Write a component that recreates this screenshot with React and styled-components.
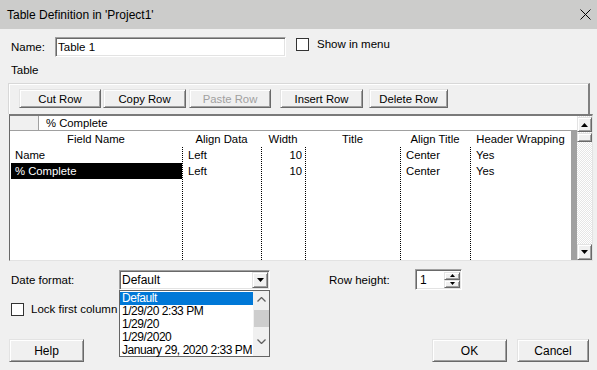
import React from 'react';
import styled, { createGlobalStyle } from 'styled-components';

const Global = createGlobalStyle`
  html, body { margin: 0; padding: 0; background: #f0f0f0; }
  body { font-family: "Liberation Sans", Arial, sans-serif; font-size: 11.5px; color: #000; }
  #root { width: 597px; height: 370px; overflow: hidden; }
  * { box-sizing: border-box; }
`;

const Window = styled.div`
  width: 597px;
  height: 370px;
  display: flex;
  flex-direction: column;
  background: #f0f0f0;
  overflow: hidden;
`;

const TitleBar = styled.div`
  height: 29px;
  flex: none;
  background: #cccccb;
  display: flex;
  align-items: center;
  justify-content: space-between;
  padding: 0 6px 0 7px;
  font-size: 12px;
`;

const CloseIcon = () => (
  <svg width="11" height="11" viewBox="0 0 11 11">
    <path d="M0.5 0.5 L10.5 10.5 M10.5 0.5 L0.5 10.5" stroke="#000" strokeWidth="1" fill="none" />
  </svg>
);

const Body = styled.div`
  flex: 1;
  display: flex;
  flex-direction: column;
  padding: 8px 4px 8px 8px;
`;

const Row = styled.div`
  display: flex;
  align-items: ${(p) => p.$align || 'center'};
  padding-left: ${(p) => p.$pl ?? 3}px;
  margin-top: ${(p) => p.$mt || 0}px;
`;

const Label = styled.span`
  width: ${(p) => (p.$w ? `${p.$w}px` : 'auto')};
  line-height: ${(p) => p.$lh || 14}px;
  margin-left: ${(p) => p.$ml || 0}px;
  white-space: nowrap;
  flex: none;
`;

const sunken = `
  border: 1px solid;
  border-color: #a0a0a0 #ffffff #ffffff #a0a0a0;
  box-shadow: inset 1px 1px #696969, inset -1px -1px #e3e3e3;
  background: #fff;
`;

const raised = `
  border: 1px solid;
  border-color: #e3e3e3 #696969 #696969 #e3e3e3;
  box-shadow: inset 1px 1px #ffffff, inset -1px -1px #a0a0a0;
  background: #f0f0f0;
`;

const TextInput = styled.div`
  ${sunken}
  width: 231px;
  height: 20px;
  padding-left: 2px;
  line-height: 18px;
  flex: none;
`;

const CheckBox = styled.div`
  width: 13px;
  height: 13px;
  border: 1px solid #333;
  background: #fff;
  flex: none;
  margin-left: ${(p) => p.$ml || 0}px;
`;

const CheckGroup = styled.div`
  display: flex;
  align-items: center;
  margin-left: ${(p) => p.$ml || 0}px;
  height: 14px;
`;

const Toolbar = styled.div`
  margin-top: 6px;
  width: 582px;
  height: 31px;
  display: flex;
  align-items: flex-start;
  padding: 5px 0 0 10px;
  border-top: 1px solid #d8d8d8;
  border-left: 1px solid #d8d8d8;
  border-right: 2px solid #808080;
  box-shadow: inset 1px 1px #ffffff;
  flex: none;
`;

const ToolButton = styled.div`
  ${raised}
  width: ${(p) => p.$w || 82}px;
  height: 19px;
  margin-left: ${(p) => p.$ml || 0}px;
  display: flex;
  align-items: center;
  justify-content: center;
  font-size: 11.3px;
  color: ${(p) => (p.$disabled ? '#a0a0a0' : '#000')};
  flex: none;
`;

const Grid = styled.div`
  margin-left: 1px;
  width: 584px;
  height: 147px;
  display: flex;
  border-top: 2px solid #7a7a7a;
  border-left: 1px solid #696969;
  border-right: 1px solid #e3e3e3;
  border-bottom: 1px solid #e3e3e3;
  background: #fff;
  flex: none;
`;

const GridMain = styled.div`
  width: 567px;
  display: flex;
  flex-direction: column;
`;

const EditRow = styled.div`
  height: 15px;
  display: flex;
  border-bottom: 1px solid #a0a0a0;
  flex: none;
`;

const EditCorner = styled.div`
  width: 29px;
  background: #f0f0f0;
  border-right: 1px solid #a0a0a0;
`;

const EditText = styled.div`
  padding-left: 7px;
  line-height: 14px;
  font-size: 11.3px;
`;

const GridBody = styled.div`
  flex: 1;
  display: flex;
`;

const Columns = styled.div`
  width: 561px;
  display: flex;
`;

const Strip = styled.div`
  width: 6px;
  background: #a0a0a0;
`;

const Column = styled.div`
  width: ${(p) => p.$w}px;
  display: flex;
  flex-direction: column;
  flex: none;
`;

const HeadCell = styled.div`
  height: 16px;
  line-height: 16px;
  text-align: center;
  white-space: nowrap;
  font-size: 11.3px;
`;

const ColBody = styled.div`
  flex: 1;
  border-left: ${(p) => (p.$sep ? '1px dotted #000' : 'none')};
`;

const Cell = styled.div`
  height: 16px;
  line-height: 16px;
  white-space: nowrap;
  font-size: 11.3px;
  text-align: ${(p) => p.$align || 'left'};
  padding: 0 ${(p) => (p.$align === 'right' ? 3 : 4)}px 0 ${(p) => (p.$sel ? 4 : 5)}px;
  margin-left: ${(p) => (p.$sel ? 1 : 0)}px;
  background: ${(p) => (p.$sel ? '#000' : 'transparent')};
  color: ${(p) => (p.$sel ? '#fff' : '#000')};
`;

const VScroll = styled.div`
  width: 15px;
  display: flex;
  flex-direction: column;
  background: repeating-conic-gradient(#ffffff 0 25%, #e6e6e6 0 50%) 0 0 / 2px 2px;
`;

const ScrollBtn = styled.div`
  ${raised}
  height: ${(p) => p.$h || 15}px;
  margin-top: ${(p) => p.$mt || 0}px;
  display: flex;
  align-items: center;
  justify-content: center;
  flex: none;
`;

const Track = styled.div`
  flex: 1;
`;

const Arrow = ({ down }) => (
  <svg width="7" height="4" viewBox="0 0 7 4">
    <polygon points={down ? '0,0 7,0 3.5,4' : '0,4 7,4 3.5,0'} fill="#000" />
  </svg>
);

const Combo = styled.div`
  ${sunken}
  position: relative;
  width: 151px;
  height: 20px;
  display: flex;
  align-items: center;
  justify-content: space-between;
  padding: 0 1px 0 2px;
  flex: none;
`;

const ComboText = styled.span`
  line-height: 16px;
  font-size: 12px;
`;

const ComboBtn = styled.div`
  ${raised}
  width: 16px;
  height: 16px;
  display: flex;
  align-items: center;
  justify-content: center;
`;

const DropList = styled.div`
  position: absolute;
  top: 19px;
  left: -1px;
  width: 151px;
  height: 67px;
  border: 1px solid #646464;
  background: #fff;
  display: flex;
  z-index: 5;
`;

const Items = styled.div`
  flex: 1;
  padding-top: 1px;
`;

const Item = styled.div`
  height: 13px;
  line-height: 13px;
  padding-left: 2px;
  font-size: 12px;
  letter-spacing: -0.45px;
  white-space: nowrap;
  background: ${(p) => (p.$sel ? '#0078d7' : 'transparent')};
  color: ${(p) => (p.$sel ? '#fff' : '#000')};
`;

const ListScroll = styled.div`
  width: 16px;
  background: #f0f0f0;
  display: flex;
  flex-direction: column;
  align-items: center;
`;

const Chevron = styled.div`
  height: ${(p) => p.$h}px;
  display: flex;
  align-items: center;
  justify-content: center;
`;

const ListThumb = styled.div`
  width: 15px;
  height: 17px;
  background: #cdcdcd;
  margin-top: 1px;
`;

const ChevronIcon = ({ down }) => (
  <svg width="9" height="5" viewBox="0 0 9 5">
    <polyline
      points={down ? '0.5,0.5 4.5,4.5 8.5,0.5' : '0.5,4.5 4.5,0.5 8.5,4.5'}
      fill="none"
      stroke="#606060"
      strokeWidth="1.3"
    />
  </svg>
);

const Spin = styled.div`
  ${sunken}
  width: 47px;
  height: 21px;
  display: flex;
  align-items: center;
  justify-content: space-between;
  padding: 1px 1px 1px 4px;
  flex: none;
`;

const SpinText = styled.span`
  font-size: 12px;
  line-height: 16px;
`;

const SpinBtns = styled.div`
  display: flex;
  flex-direction: column;
  width: 16px;
`;

const SpinBtn = styled.div`
  ${raised}
  height: 8px;
  display: flex;
  align-items: center;
  justify-content: center;
`;

const SmallArrow = ({ down }) => (
  <svg width="5" height="3" viewBox="0 0 5 3">
    <polygon points={down ? '0,0 5,0 2.5,3' : '0,3 5,3 2.5,0'} fill="#000" />
  </svg>
);

const Footer = styled.div`
  margin-top: auto;
  display: flex;
  align-items: center;
`;

const PushButton = styled.div`
  ${raised}
  width: ${(p) => p.$w || 75}px;
  height: 23px;
  margin-left: ${(p) => (p.$ml === 'auto' ? 'auto' : `${p.$ml || 0}px`)};
  display: flex;
  align-items: center;
  justify-content: center;
  font-size: 12px;
  flex: none;
`;

const columns = [
  { title: 'Field Name', w: 172, cells: [{ t: 'Name' }, { t: '% Complete', sel: true }] },
  { title: 'Align Data', w: 79, cells: [{ t: 'Left' }, { t: 'Left' }] },
  { title: 'Width', w: 44, align: 'right', cells: [{ t: '10' }, { t: '10' }] },
  { title: 'Title', w: 95, cells: [] },
  { title: 'Align Title', w: 70, cells: [{ t: 'Center' }, { t: 'Center' }] },
  { title: 'Header Wrapping', w: 101, cells: [{ t: 'Yes' }, { t: 'Yes' }] },
];

const formats = ['Default', '1/29/20 2:33 PM', '1/29/20', '1/29/2020', 'January 29, 2020 2:33 PM'];

export default function App() {
  return (
    <>
      <Global />
      <Window>
        <TitleBar>
          <span>Table Definition in 'Project1'</span>
          <CloseIcon />
        </TitleBar>
        <Body>
          <Row $align="flex-start">
            <Label $w={44} $lh={20}>Name:</Label>
            <TextInput>Table 1</TextInput>
            <CheckGroup $ml={10}>
              <CheckBox />
              <Label $ml={8}>Show in menu</Label>
            </CheckGroup>
          </Row>
          <Row $mt={6}>
            <Label>Table</Label>
          </Row>
          <Toolbar>
            <ToolButton>Cut Row</ToolButton>
            <ToolButton $ml={2} $w={83}>Copy Row</ToolButton>
            <ToolButton $ml={3} $disabled>Paste Row</ToolButton>
            <ToolButton $ml={9} $w={83}>Insert Row</ToolButton>
            <ToolButton $ml={6} $w={79}>Delete Row</ToolButton>
          </Toolbar>
          <Grid>
            <GridMain>
              <EditRow>
                <EditCorner />
                <EditText>% Complete</EditText>
              </EditRow>
              <GridBody>
                <Columns>
                  {columns.map((c, i) => (
                    <Column key={c.title} $w={c.w}>
                      <HeadCell>{c.title}</HeadCell>
                      <ColBody $sep={i > 0}>
                        {c.cells.map((cell, j) => (
                          <Cell key={j} $align={c.align} $sel={cell.sel}>
                            {cell.t}
                          </Cell>
                        ))}
                      </ColBody>
                    </Column>
                  ))}
                </Columns>
                <Strip />
              </GridBody>
            </GridMain>
            <VScroll>
              <ScrollBtn $h={15} $mt={1}>
                <Arrow />
              </ScrollBtn>
              <ScrollBtn $h={9} $mt={1} />
              <Track />
              <ScrollBtn $h={16}>
                <Arrow down />
              </ScrollBtn>
            </VScroll>
          </Grid>
          <Row $mt={8}>
            <Label $w={108}>Date format:</Label>
            <Combo>
              <ComboText>Default</ComboText>
              <ComboBtn>
                <Arrow down />
              </ComboBtn>
              <DropList>
                <Items>
                  {formats.map((f, i) => (
                    <Item key={f} $sel={i === 0}>
                      {f}
                    </Item>
                  ))}
                </Items>
                <ListScroll>
                  <Chevron $h={18}>
                    <ChevronIcon />
                  </Chevron>
                  <ListThumb />
                  <Chevron $h={29}>
                    <ChevronIcon down />
                  </Chevron>
                </ListScroll>
              </DropList>
            </Combo>
            <Label $ml={59} $w={86}>Row height:</Label>
            <Spin>
              <SpinText>1</SpinText>
              <SpinBtns>
                <SpinBtn>
                  <SmallArrow />
                </SpinBtn>
                <SpinBtn>
                  <SmallArrow down />
                </SpinBtn>
              </SpinBtns>
            </Spin>
          </Row>
          <Row $mt={12}>
            <CheckBox />
            <Label $ml={7}>Lock first column</Label>
          </Row>
          <Footer>
            <PushButton $ml={1}>Help</PushButton>
            <PushButton $ml="auto">OK</PushButton>
            <PushButton $ml={10} $w={72}>Cancel</PushButton>
            <div style={{ width: 4 }} />
          </Footer>
        </Body>
      </Window>
    </>
  );
}
